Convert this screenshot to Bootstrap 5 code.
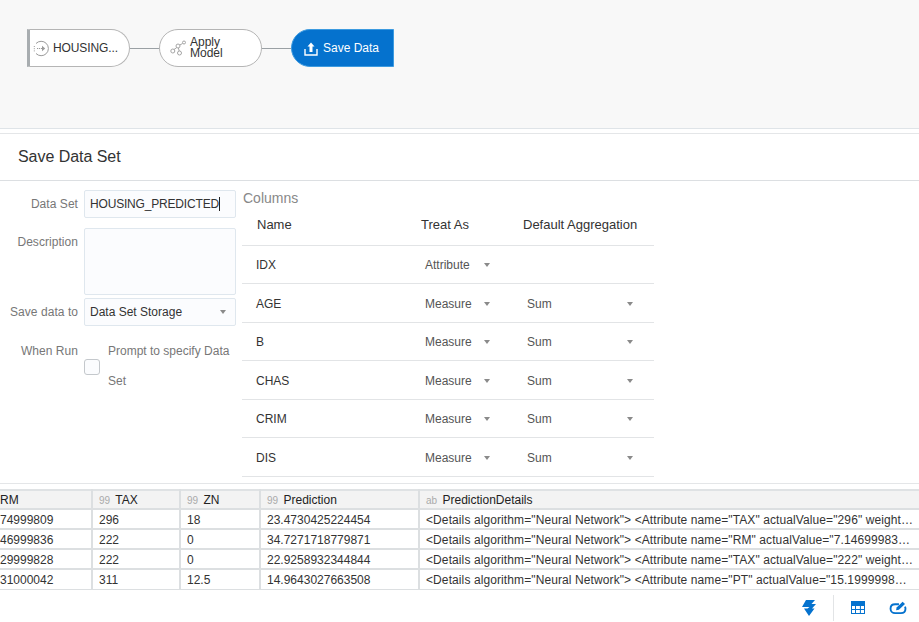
<!DOCTYPE html>
<html lang="en">
<head>
<meta charset="utf-8">
<title>Save Data Set</title>
<link href="https://cdn.jsdelivr.net/npm/bootstrap@5.3.0/dist/css/bootstrap.min.css" rel="stylesheet">
<script src="https://cdn.jsdelivr.net/npm/bootstrap@5.3.0/dist/js/bootstrap.bundle.min.js"></script>
<style>
html,body{height:622px;overflow:hidden;background:#fff}
body{font-family:"Liberation Sans",Arial,sans-serif;font-size:12px;color:#333;line-height:1.2;width:919px}
.flow-canvas{height:129px;background:#f8f8f8;border-bottom:1px solid #dfe4e8;padding:29px 0 0 27px}
.flow-node{width:103px;height:38px;background:#fff;border:1px solid #b5b5b5;border-radius:19px;font-size:12px;color:#333;flex:none;padding-top:1px}
.node-source{border-radius:0 19px 19px 0;border-left:3px solid #a8adb0;padding-left:3px;letter-spacing:-.1px}
.node-source .icon-gap{margin-right:3px}
.node-model{padding-left:10px;line-height:11px;padding-top:0}
.node-save{background:#0572ce;border:1px solid #3d9be0;border-radius:19px 0 0 19px;color:#fff;padding-left:12px}
.node-save .save-name{margin-left:1px}
.flow-link{width:29px;height:1px;background:#9aa0a4;flex:none;margin-top:19px}
.icon-gap{margin-right:4px;flex:none}
.title-bar{margin-top:4px;height:48px;border-top:1px solid #e4e6e8;border-bottom:1px solid #dcdfe2;padding-left:18px;font-size:16px;letter-spacing:-.05px;color:#333}
.form-area{height:302px}
.side-form{width:243px;flex:none;padding-top:9px}
.side-label{width:78px;text-align:right;color:#777;flex:none;line-height:14px;letter-spacing:.05px}
.side-field{width:152px;margin-left:6px;flex:none}
.plain-input{height:28px;padding:0 5px;font-size:12px;line-height:26px;border:1px solid #dfe7ee;border-radius:2px;background:#fbfcfe;color:#333;box-shadow:none}
.typed-name{letter-spacing:-.18px}
.type-cursor{display:inline-block;width:1px;height:14px;background:#222;vertical-align:-3px}
.desc-input{height:67px;padding:4px;resize:none}
.store-select{height:28px;padding:0 5px;font-size:12px;line-height:26px;border:1px solid #dfe7ee;border-radius:2px;background-color:#fbfcfe;color:#333;background-image:none}
.tri{display:inline-block;width:0;height:0;border-left:3.5px solid transparent;border-right:3.5px solid transparent;border-top:4px solid #8a8a8a}
.check-box{width:16px;height:16px;margin:2px 0 0;border:1px solid #c4c8cc;border-radius:2px;background:#fbfcfe;flex:none}
.check-field{width:156px;margin-top:-8px}
.check-text{color:#777;line-height:30px;margin-left:8px}
.columns-wrap{width:412px;margin-left:-1px;padding-top:9px}
.columns-title{font-size:14px;color:#888;line-height:16px;padding-left:1px}
.col-table{table-layout:fixed;width:412px;margin:0;font-size:12px;--bs-table-bg:transparent}
.col-table th,.col-table td{border-bottom:1px solid #e2e4e6;padding:2px 0 0;font-weight:400;color:#333;vertical-align:middle;height:38.5px;box-shadow:none}
.col-table th{height:39px;font-size:13px;padding:0 0 0 1px}
.col-table td:first-child{padding-left:14px}
.col-table th:first-child{padding-left:15px}
.col-table .treat{padding-left:5px}
.col-table .agg{padding-left:5px}
.w-treat{width:59px;color:#555}
.w-agg{width:100px;color:#555}
.data-area{border-top:1px solid #e4e6e8;padding-top:5px}
.data-table{table-layout:fixed;width:919px;margin:0;font-size:12px;border-top:2px solid #dfe2e4;--bs-table-bg:transparent}
.data-table th,.data-table td{height:20px;padding:2px 6px 0;border:solid #dcdfe1;border-width:0 0 2px 2px;white-space:nowrap;overflow:hidden;text-overflow:ellipsis;line-height:16px;font-weight:400;color:#333;box-shadow:none;vertical-align:top}
.data-table th{background:#f3f3f3;color:#222;height:19px;line-height:15px}
.data-table th:first-child,.data-table td:first-child{border-left:0;padding-left:0}
.data-table tr:last-child td{border-bottom-width:1px}
.data-table .detail-text{letter-spacing:.1px}
.type-tag{font-size:10px;color:#aaa;margin-right:2px}
.tool-bar{height:33px;padding-right:12px}
.tool-sep{width:1px;height:26px;background:#e2e4e6;margin:5px 17px 0 17px;align-self:flex-start}
.table-icon{margin-right:24px}
.tool-icon{margin-top:3px}
</style>
</head>
<body>
<div class="flow-canvas d-flex align-items-start">
  <div class="flow-node node-source d-flex align-items-center">
    <svg width="17" height="17" viewBox="0 0 17 17" fill="none" stroke="#9a9a9a" class="icon-gap"><path d="M3 3.500A7.200 7.200 0 1 1 3 13.500" stroke-width="1"/><path d="M1.300 6v5.500" stroke-dasharray="1 1.200" stroke-width="1"/><path d="M4 8.500h6" stroke-width="1.200" stroke-dasharray="1.200 .8"/><path d="M9 5.800l3.200 2.700L9 11.200z" fill="#9a9a9a" stroke="none"/></svg>
    <span>HOUSING...</span>
  </div>
  <div class="flow-link"></div>
  <div class="flow-node node-model d-flex align-items-center">
    <svg width="16" height="16" viewBox="0 0 16 16" fill="none" stroke="#a5a5a5" stroke-width="1" class="icon-gap"><circle cx="2.800" cy="11" r="2"/><circle cx="9.500" cy="13" r="2"/><circle cx="8" cy="6" r="2"/><circle cx="14" cy="2.500" r="1.500"/><path d="M4 9.500L6.800 7.500M8.400 8l.8 3M9.800 5l2.800-1.500"/></svg>
    <span>Apply<br>Model</span>
  </div>
  <div class="flow-link"></div>
  <div class="flow-node node-save d-flex align-items-center">
    <svg width="14" height="14" viewBox="0 0 14 14" fill="none" class="icon-gap"><path d="M1 7v6h12V7" stroke="#fff" stroke-width="1.400"/><path d="M7 .5L10.500 4.500H8.500V10h-3V4.500H3.500z" fill="#fff"/></svg>
    <span class="save-name">Save Data</span>
  </div>
</div>

<div class="title-bar d-flex align-items-center">Save Data Set</div>

<div class="form-area d-flex">
  <div class="side-form">
    <div class="d-flex align-items-center" style="margin-bottom:10px">
      <label class="side-label">Data Set</label>
      <div class="side-field"><div class="form-control plain-input"><span class="typed-name">HOUSING_PREDICTED</span><span class="type-cursor"></span></div></div>
    </div>
    <div class="d-flex align-items-start" style="margin-bottom:3px">
      <label class="side-label" style="padding-top:7px">Description</label>
      <div class="side-field"><textarea class="form-control plain-input desc-input" aria-label="Description"></textarea></div>
    </div>
    <div class="d-flex align-items-center" style="margin-bottom:18px">
      <label class="side-label">Save data to</label>
      <div class="side-field">
        <div class="form-control store-select d-flex align-items-center justify-content-between">Data Set Storage<span class="tri me-1"></span></div>
      </div>
    </div>
    <div class="d-flex align-items-start">
      <label class="side-label">When Run</label>
      <div class="side-field check-field d-flex align-items-center">
        <input class="form-check-input check-box" type="checkbox" aria-label="Prompt to specify Data Set">
        <div class="check-text">Prompt to specify Data Set</div>
      </div>
    </div>
  </div>
  <div class="columns-wrap">
    <div class="columns-title">Columns</div>
    <table class="table col-table">
      <colgroup><col style="width:178px"><col style="width:102px"><col style="width:132px"></colgroup>
      <thead><tr><th>Name</th><th>Treat As</th><th>Default Aggregation</th></tr></thead>
      <tbody>
        <tr><td>IDX</td><td class="treat"><span class="d-inline-flex align-items-center"><span class="w-treat">Attribute</span><span class="tri"></span></span></td><td></td></tr>
        <tr><td>AGE</td><td class="treat"><span class="d-inline-flex align-items-center"><span class="w-treat">Measure</span><span class="tri"></span></span></td><td class="agg"><span class="d-inline-flex align-items-center"><span class="w-agg">Sum</span><span class="tri"></span></span></td></tr>
        <tr><td>B</td><td class="treat"><span class="d-inline-flex align-items-center"><span class="w-treat">Measure</span><span class="tri"></span></span></td><td class="agg"><span class="d-inline-flex align-items-center"><span class="w-agg">Sum</span><span class="tri"></span></span></td></tr>
        <tr><td>CHAS</td><td class="treat"><span class="d-inline-flex align-items-center"><span class="w-treat">Measure</span><span class="tri"></span></span></td><td class="agg"><span class="d-inline-flex align-items-center"><span class="w-agg">Sum</span><span class="tri"></span></span></td></tr>
        <tr><td>CRIM</td><td class="treat"><span class="d-inline-flex align-items-center"><span class="w-treat">Measure</span><span class="tri"></span></span></td><td class="agg"><span class="d-inline-flex align-items-center"><span class="w-agg">Sum</span><span class="tri"></span></span></td></tr>
        <tr><td>DIS</td><td class="treat"><span class="d-inline-flex align-items-center"><span class="w-treat">Measure</span><span class="tri"></span></span></td><td class="agg"><span class="d-inline-flex align-items-center"><span class="w-agg">Sum</span><span class="tri"></span></span></td></tr>
      </tbody>
    </table>
  </div>
</div>

<div class="data-area">
  <table class="table data-table">
    <colgroup><col style="width:92px"><col style="width:88px"><col style="width:80px"><col style="width:159px"><col></colgroup>
    <thead><tr><th>RM</th><th><span class="type-tag">99</span> TAX</th><th><span class="type-tag">99</span> ZN</th><th><span class="type-tag">99</span> Prediction</th><th><span class="type-tag">ab</span> PredictionDetails</th></tr></thead>
    <tbody>
      <tr><td>74999809</td><td>296</td><td>18</td><td>23.4730425224454</td><td class="detail-text">&lt;Details algorithm="Neural Network"&gt; &lt;Attribute name="TAX" actualValue="296" weight="0.41" /&gt;</td></tr>
      <tr><td>46999836</td><td>222</td><td>0</td><td>34.7271718779871</td><td class="detail-text">&lt;Details algorithm="Neural Network"&gt; &lt;Attribute name="RM" actualValue="7.14699983596802" /&gt;</td></tr>
      <tr><td>29999828</td><td>222</td><td>0</td><td>22.9258932344844</td><td class="detail-text">&lt;Details algorithm="Neural Network"&gt; &lt;Attribute name="TAX" actualValue="222" weight="0.38" /&gt;</td></tr>
      <tr><td>31000042</td><td>311</td><td>12.5</td><td>14.9643027663508</td><td class="detail-text">&lt;Details algorithm="Neural Network"&gt; &lt;Attribute name="PT" actualValue="15.1999998092651" /&gt;</td></tr>
    </tbody>
  </table>
</div>

<div class="tool-bar d-flex justify-content-end align-items-center">
  <svg width="15" height="16" viewBox="0 0 15 16" fill="#0572ce" class="tool-icon" role="img" aria-label="Refresh"><path d="M5 0h9l-3.500 4H15l-4 4.500h2.500L8 16 3 8.500h3.500L8.500 7H1z"/></svg>
  <div class="tool-sep"></div>
  <svg width="14" height="13" viewBox="0 0 14 13" class="table-icon tool-icon" role="img" aria-label="Table view"><rect width="14" height="13" fill="#0572ce"/><path d="M1 5h3v3H1zM5 5h3.900v3H5zM9.900 5H13v3H9.900zM1 9h3v3H1zM5 9h3.900v3H5zM9.900 9H13v3H9.900z" fill="#fff"/></svg>
  <svg width="18" height="14" viewBox="0 0 18 15" fill="none" class="tool-icon" role="img" aria-label="Edit"><path d="M10 3.500H6C3 3.500 1 5.500 1 8.200S3 13 6 13h6c3 0 5-2 5-4.800 0-.8-.2-1.500-.5-2.200" stroke="#0572ce" stroke-width="2"/><path d="M7 9.800l.5-2.800L14 .8l2.500 2.300-6.500 6.200z" fill="#0572ce"/></svg>
</div>
</body>
</html>
